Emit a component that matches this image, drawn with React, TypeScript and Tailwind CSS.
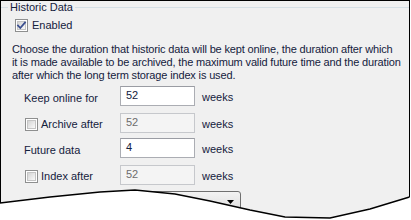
import React from "react";

const font = "font-['Liberation_Sans',Arial,sans-serif]";

function Check({ checked = false }: { checked?: boolean }) {
  return (
    <span className="relative inline-block w-[13px] h-[13px] shrink-0 border border-[#8e8f8f] bg-white">
      <span className="absolute inset-[1px] bg-gradient-to-br from-[#d4d4d4] to-[#fafafa] border border-[#c4c4c4]" />
      {checked && (
        <svg viewBox="0 0 11 11" className="absolute inset-0 w-[11px] h-[11px]">
          <path
            d="M2 5.5 L4.3 8 L9 2.5"
            fill="none"
            stroke="#3b4f8f"
            strokeWidth="1.8"
            strokeLinecap="square"
          />
        </svg>
      )}
    </span>
  );
}

function Field({ value, disabled = false }: { value: string; disabled?: boolean }) {
  return (
    <div
      className={`w-[75px] h-[20px] border pl-[5px] flex items-center text-[11px] leading-[13px] ${
        disabled
          ? "bg-[#f4f4f4] border-[#c6c8cc] text-[#6d6d6d]"
          : "bg-white border-[#abadb3] border-t-[#9a9ca3] text-[#14213d]"
      }`}
    >
      <span className="-mt-[1px]">{value}</span>
    </div>
  );
}

const rows = [
  { label: "Keep online for", value: "52", box: false, mt: "mt-[4px]" },
  { label: "Archive after", value: "52", box: true, mt: "mt-[7px]" },
  { label: "Future data", value: "4", box: false, mt: "mt-[5px]" },
  { label: "Index after", value: "52", box: true, mt: "mt-[7px]" },
];

export default function App() {
  return (
    <div className={`relative w-[411px] h-[220px] bg-white overflow-hidden ${font} text-[11px] text-[#14213d]`}>
      <div className="w-[410px] h-[220px] bg-[#f0f0f0] border border-black flex flex-col">
        {/* group header */}
        <div className="flex items-center h-[13px]">
          <span className="w-[7px] h-px bg-[#d5dfe5]" />
          <span className="px-[2px] leading-[13px]">Historic Data</span>
          <span className="flex-1 h-px bg-[#d5dfe5]" />
        </div>

        {/* enabled */}
        <div className="flex items-center gap-[4px] ml-[14px] mt-[5px] h-[13px]">
          <Check checked />
          <span className="leading-[13px]">Enabled</span>
        </div>

        {/* description */}
        <div className="ml-[11px] mt-[11px] leading-[13px] whitespace-nowrap tracking-[-0.15px]">
          <div>Choose the duration that historic data will be kept online, the duration after which</div>
          <div>it is made available to be archived, the maximum valid future time and the duration</div>
          <div>after which the long term storage index is used.</div>
        </div>

        {/* rows */}
        {rows.map((r) => (
          <div key={r.label} className={`flex items-center h-[20px] ${r.mt}`}>
            <div className="w-[119px] flex items-center">
              {r.box ? (
                <div className="flex items-center gap-[3px] ml-[24px] pt-[2px]">
                  <Check />
                  <span>{r.label}</span>
                </div>
              ) : (
                <span className="ml-[23px] pt-[4px]">{r.label}</span>
              )}
            </div>
            <Field value={r.value} disabled={r.box} />
            <span className="ml-[7px] pt-[2px]">weeks</span>
          </div>
        ))}

        {/* combo (cut off) */}
        <div className="ml-[119px] mt-[6px] w-[121px] h-[22px] rounded-[3px] border border-[#707070] bg-gradient-to-b from-[#f3f3f3] to-[#dcdcdc] flex items-center justify-end pr-[6px]">
          <svg viewBox="0 0 7 4" className="w-[7px] h-[4px]">
            <path d="M0 0 H7 L3.5 4 Z" fill="#000" />
          </svg>
        </div>
      </div>

      {/* torn bottom edge */}
      <svg
        className="absolute inset-0 pointer-events-none"
        width="411"
        height="220"
        viewBox="0 0 411 220"
      >
        <polygon
          points="0,203 50,197 100,192 135,190 175,194 210,201 250,210 285,217 330,218 370,209 409.5,197 411,197 411,220 0,220"
          fill="#fff"
        />
        <polyline
          points="0,203 50,197 100,192 135,190 175,194 210,201 250,210 285,217 330,218 370,209 409.5,197"
          fill="none"
          stroke="#000"
          strokeWidth="1.4"
        />
      </svg>
    </div>
  );
}
